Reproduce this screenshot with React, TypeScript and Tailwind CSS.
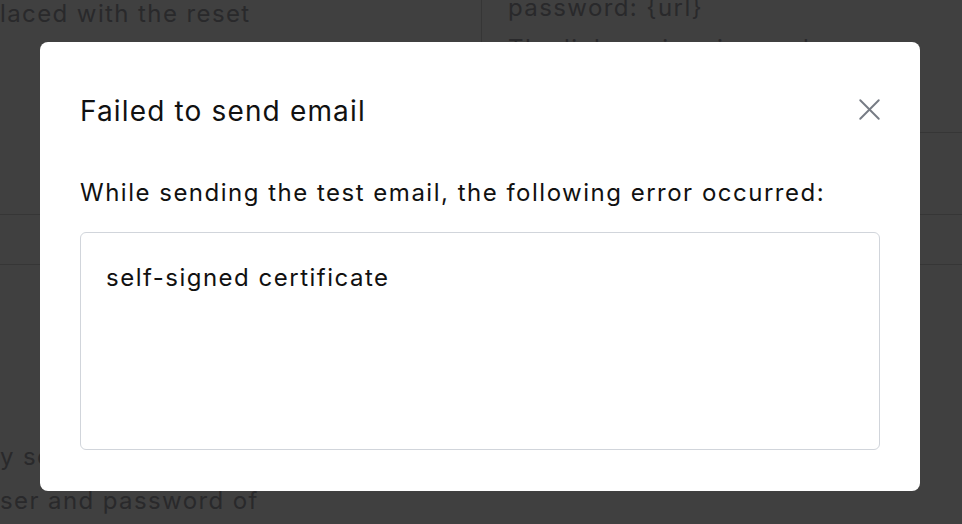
import { X } from 'lucide-react';

const font = { fontFamily: 'Inter, "Noto Sans", "Liberation Sans", sans-serif' };

function BackgroundPage() {
  return (
    <div className="grid grid-cols-[481px_481px] h-[524px] text-[24px] tracking-[1.4px] text-[#29292b]">
      {/* left column */}
      <div className="flex flex-col">
        <div className="h-[215px] border-b border-[#363636]">
          <p className="leading-[32px] -mt-[2px] whitespace-nowrap">laced with the reset</p>
        </div>
        <div className="h-[50px] border-b border-[#363636]" />
        <div className="pt-[170px] flex flex-col">
          <p className="leading-[44px] whitespace-nowrap">y sending emails with a test</p>
          <p className="leading-[44px] whitespace-nowrap">ser and password of</p>
        </div>
      </div>
      {/* right column */}
      <div className="flex flex-col">
        <div className="h-[133px] border-b border-l border-[#363636] pl-[26px]">
          <p className="leading-[41px] -mt-[13px] whitespace-nowrap">password: {'{url}'}</p>
          <p className="leading-[41px] whitespace-nowrap">The link expires in one hour.</p>
        </div>
        <div className="h-[82px] border-b border-[#363636]" />
        <div className="h-[50px] border-b border-[#363636]" />
      </div>
    </div>
  );
}

export default function App() {
  return (
    <div className="relative h-[524px] w-full overflow-hidden bg-[#404040]" style={font}>
      <BackgroundPage />

      {/* Dialog */}
      <div className="absolute inset-0 pl-[40px] pt-[42px]">
        <div className="w-[880px] h-[449px] bg-white rounded-[8px] px-[40px] pt-[51px] pb-[41px] flex flex-col">
          <div className="flex items-center justify-between h-[36px]">
            <h2 className="text-[28px] leading-[36px] tracking-[1.15px] text-[#111111] font-normal">Failed to send email</h2>
            <button className="text-[#767b84] -mr-[8px] -mt-[3px]">
              <X className="w-[37px] h-[37px]" strokeWidth={1.25} />
            </button>
          </div>

          <p className="mt-[48px] text-[24px] leading-[32px] tracking-[1.5px] text-[#111111]">
            While sending the test email, the following error occurred:
          </p>

          <textarea
            readOnly
            defaultValue="self-signed certificate"
            className="mt-[23px] flex-1 w-full resize-none rounded-[6px] border border-[#d1d5db] px-[25px] pt-[29px] text-[24px] leading-[32px] tracking-[1.5px] text-[#111111] outline-none"
            style={font}
          />
        </div>
      </div>
    </div>
  );
}
